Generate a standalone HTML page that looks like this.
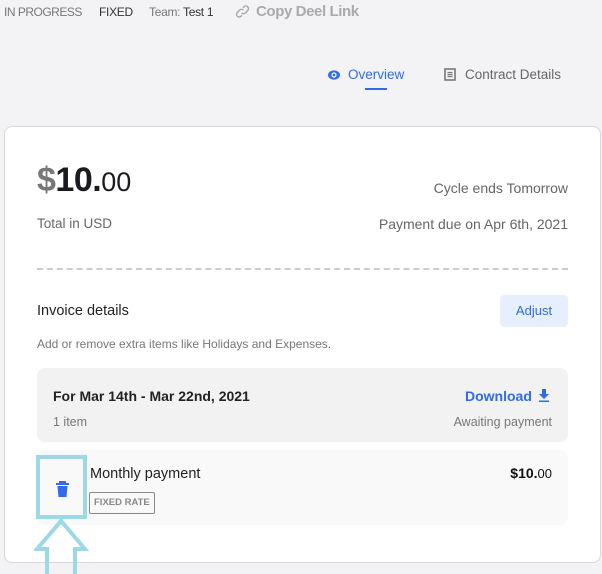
<!DOCTYPE html>
<html><head><style>
*{margin:0;padding:0;box-sizing:border-box}
body{width:602px;height:574px;background:#f3f3f6;font-family:"Liberation Sans",sans-serif;position:relative;overflow:hidden;color:#1b1b1f}
.a{position:absolute;white-space:nowrap}
</style></head><body>
<div class="a" style="left:4px;top:5px;font-size:12px;letter-spacing:-0.5px;color:#777">IN PROGRESS</div>
<div class="a" style="left:99px;top:5px;font-size:12px;letter-spacing:-0.3px;color:#333">FIXED</div>
<div class="a" style="left:149px;top:5px;font-size:12px;letter-spacing:-0.3px;color:#777">Team: <span style="color:#333">Test 1</span></div>
<svg class="a" style="left:235px;top:4px" width="15" height="15" viewBox="0 0 16 16" fill="none" stroke="#aaa" stroke-width="1.6"><path d="M7 9.5a3 3 0 0 0 4 0l2.5-2.5a2.8 2.8 0 0 0-4-4L8.5 4"/><path d="M9 6.5a3 3 0 0 0-4 0L2.5 9a2.8 2.8 0 0 0 4 4l1-1"/></svg>
<div class="a" style="left:256px;top:3px;font-size:15px;color:#aaa;font-weight:bold;letter-spacing:-0.4px">Copy Deel Link</div>

<svg class="a" style="left:327px;top:68px" width="14" height="14" viewBox="0 0 14 14"><ellipse cx="7" cy="7" rx="6" ry="4.6" fill="#2f6bea"/><circle cx="7" cy="7" r="2.6" fill="#fff"/><circle cx="7" cy="7" r="1.4" fill="#2f6bea"/></svg>
<div class="a" style="left:348px;top:67px;font-size:13.5px;color:#2f6bea">Overview</div>
<div class="a" style="left:365px;top:88px;width:22px;height:2px;background:#2f6bea"></div>
<svg class="a" style="left:444px;top:68px" width="12" height="13" viewBox="0 0 12 13"><rect x="1" y="1" width="10" height="11" fill="none" stroke="#777" stroke-width="1.6"/><path d="M3.5 4.5h5M3.5 6.5h5M3.5 8.5h5" stroke="#777" stroke-width="1.2"/></svg>
<div class="a" style="left:465px;top:67px;font-size:13.5px;color:#666">Contract Details</div>

<div class="a" style="left:4px;top:126px;width:597px;height:437px;background:#fff;border:1px solid #d8d8dc;border-radius:8px"></div>
<div class="a" style="left:37px;top:161px;font-size:34px;font-weight:bold;letter-spacing:-0.5px"><span style="color:#777">$</span>10.<span style="font-weight:normal;font-size:27px;letter-spacing:0">00</span></div>
<div class="a" style="left:37px;top:216px;font-size:13.5px;color:#666">Total in USD</div>
<div class="a" style="right:34px;top:180px;font-size:14px;color:#666">Cycle ends Tomorrow</div>
<div class="a" style="right:34px;top:216px;font-size:14px;color:#666">Payment due on Apr 6th, 2021</div>
<div class="a" style="left:37px;top:268px;width:531px;border-top:2px dashed #ccc"></div>

<div class="a" style="left:37px;top:303px;font-size:14.5px;color:#222">Invoice details</div>
<div class="a" style="left:500px;top:295px;width:68px;height:32px;background:#e6effd;border-radius:4px;color:#2f6bea;font-size:13px;text-align:center;line-height:32px">Adjust</div>
<div class="a" style="left:37px;top:337px;font-size:12px;color:#777">Add or remove extra items like Holidays and Expenses.</div>

<div class="a" style="left:37px;top:368px;width:531px;height:74px;background:#f2f2f2;border-radius:8px"></div>
<div class="a" style="left:53px;top:388px;font-size:14px;font-weight:bold;color:#222">For Mar 14th - Mar 22nd, 2021</div>
<div class="a" style="left:53px;top:415px;font-size:12.5px;color:#777">1 item</div>
<div class="a" style="left:465px;top:388px;font-size:14px;font-weight:bold;color:#2f6bea">Download</div>
<svg class="a" style="left:538px;top:389px" width="12" height="13" viewBox="0 0 12 13"><path d="M4 0h4v5h3L6 10 1 5h3z M1 11.5h10v1.5H1z" fill="#2f6bea"/></svg>
<div class="a" style="right:50px;top:415px;font-size:12.5px;color:#777">Awaiting payment</div>

<div class="a" style="left:37px;top:450px;width:531px;height:75px;background:#f9f9fa;border-radius:8px"></div>
<div class="a" style="left:36px;top:455px;width:51px;height:64px;border:4px solid #9dd8e8"></div>
<svg class="a" style="left:56px;top:481px" width="13" height="16" viewBox="0 0 13 16"><rect x="3" y="0" width="7" height="2" fill="#2f6bea"/><rect x="0" y="2" width="13" height="2" fill="#2f6bea"/><path d="M1.5 5h10l-1 11h-8z" fill="#2f6bea"/></svg>
<div class="a" style="left:90px;top:466px;font-size:14.5px;color:#222">Monthly payment</div>
<div class="a" style="left:89px;top:492px;height:22px;border:1px solid #888;border-radius:2px;font-size:9.5px;font-weight:bold;color:#888;padding:0 4px;line-height:20px">FIXED RATE</div>
<div class="a" style="right:50px;top:465px;font-size:14px;font-weight:bold;color:#111">$10.<span style="font-weight:normal;font-size:13px">00</span></div>

<svg class="a" style="left:34px;top:518px" width="56" height="56" viewBox="0 0 56 56"><path d="M27 3L3 31H13V60H41V31H51Z" fill="none" stroke="#9dd8e8" stroke-width="4"/></svg>
</body></html>
